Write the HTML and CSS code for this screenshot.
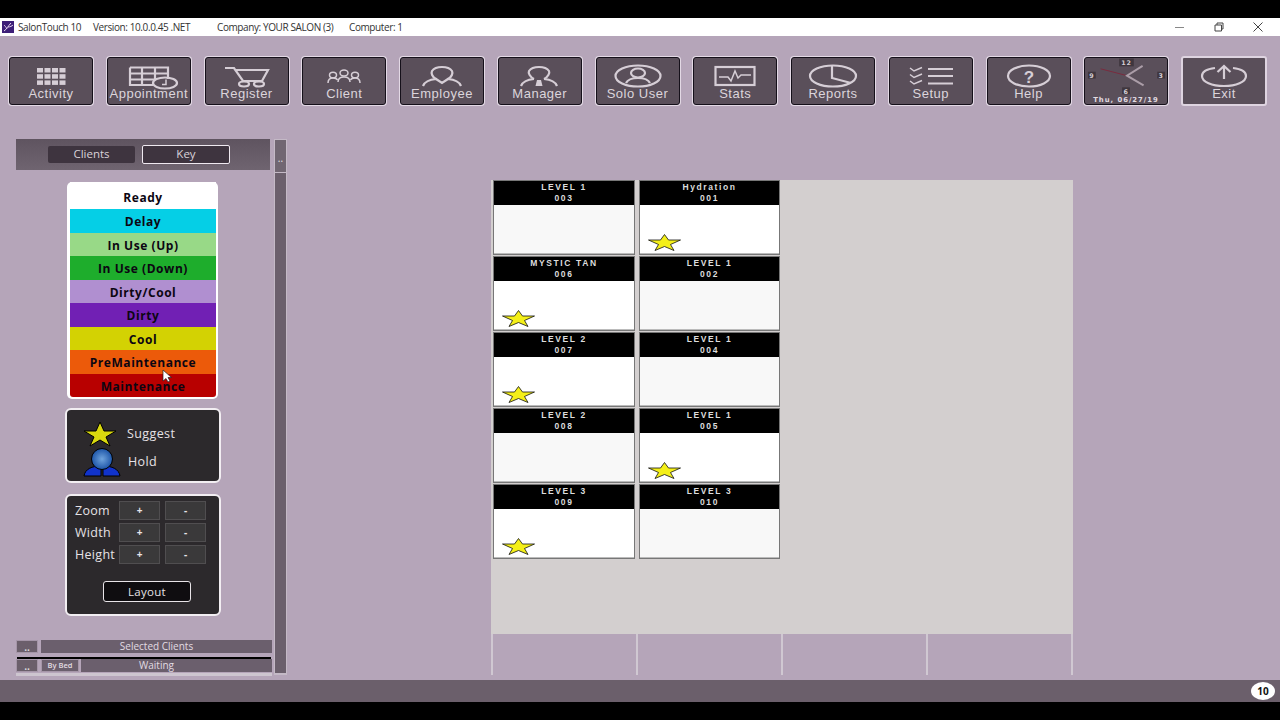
FILE: index.html
```html
<!DOCTYPE html>
<html lang="en">
<head>
<meta charset="utf-8">
<title>SalonTouch 10</title>
<link rel="stylesheet" href="styles.css">
</head>
<body>
<div class="letterbox-top"></div>
<header class="titlebar">
  <svg class="logo" viewBox="0 0 12 12"><rect width="12" height="12" fill="#3d1f78"/><path d="M2 10C5 8 6 5 9 2M6 6C8 6 10 5 11 4M5 8C4 6 3 5 2 4" stroke="#e9d8f0" stroke-width="1" fill="none"/></svg>
  <span class="app">SalonTouch 10</span>
  <span class="version">Version: 10.0.0.45 .NET</span>
  <span class="company">Company: YOUR SALON (3)</span>
  <span class="computer">Computer: 1</span>
  <div class="winctl">
    <svg viewBox="0 0 12 12"><path d="M1 6.500H10" stroke="#888" stroke-width="1"/></svg>
    <svg viewBox="0 0 12 12"><path d="M2 4H8.500V10H2ZM4 4V2H10V8H8.500" stroke="#444" fill="none"/></svg>
    <svg viewBox="0 0 12 12"><path d="M1.500 1.500L10.500 10.500M10.500 1.500L1.500 10.500" stroke="#444" fill="none"/></svg>
  </div>
</header>
<main class="app-body">
  <nav class="toolbar">
    <button class="tool"><svg class="ico" viewBox="0 0 64 30"><g class="fill"><rect x="18" y="8" width="6" height="4.500"/><rect x="25.500" y="8" width="6" height="4.500"/><rect x="33" y="8" width="6" height="4.500"/><rect x="40.500" y="8" width="6" height="4.500"/><rect x="18" y="14.200" width="6" height="4.500"/><rect x="25.500" y="14.200" width="6" height="4.500"/><rect x="33" y="14.200" width="6" height="4.500"/><rect x="40.500" y="14.200" width="6" height="4.500"/><rect x="18" y="20.400" width="6" height="4.500"/><rect x="25.500" y="20.400" width="6" height="4.500"/><rect x="33" y="20.400" width="6" height="4.500"/><rect x="40.500" y="20.400" width="6" height="4.500"/></g></svg><span>Activity</span></button>
    <button class="tool"><svg class="ico" viewBox="0 0 64 30"><path class="line" d="M13 7.500H51V19M13 7.500V25H36M13 13.500H51M13 19.500H37M25 7.500V25M38 7.500V19"/><ellipse class="line" cx="48" cy="23" rx="12" ry="5.500"/><path class="line thin" d="M49 19.500V24.500H45"/></svg><span>Appointment</span></button>
    <button class="tool"><svg class="ico" viewBox="0 0 64 30"><path class="line" d="M10 8H19L28 21H47L53 10H21"/><ellipse class="line" cx="29" cy="24" rx="5" ry="2.500"/><ellipse class="line" cx="44" cy="24" rx="5" ry="2.500"/></svg><span>Register</span></button>
    <button class="tool"><svg class="ico" viewBox="0 0 64 30"><g class="line thin"><ellipse cx="32" cy="13" rx="4" ry="3"/><path d="M26 22C26 18 29 17 32 17C35 17 38 18 38 22"/><ellipse cx="21" cy="15" rx="3.500" ry="2.800"/><path d="M16 23C16 20 18 18 21 18C23 18 25 19 25.500 20"/><ellipse cx="43" cy="15" rx="3.500" ry="2.800"/><path d="M48 23C48 20 46 18 43 18C41 18 39 19 38.500 20"/></g></svg><span>Client</span></button>
    <button class="tool"><svg class="ico" viewBox="0 0 64 30"><path class="line" d="M26 19C22 17 21 13 22 11C24 8 28 7 32 7C36 7 40 8 42 11C43 13 42 17 38 19"/><path class="line" d="M13 26C15 21 20 19.500 26 19L32 23L38 19C44 19.500 49 21 51 26"/></svg><span>Employee</span></button>
    <button class="tool"><svg class="ico" viewBox="0 0 64 30"><path class="line" d="M26 19C22 17 20 13 21 11C23 8 27 7 31 7C35 7 39 8 41 11C42 13 40 17 36 19"/><path class="line" d="M13 26C15 21 20 19.500 26 19M36 19C42 19.500 47 21 49 26"/><path class="fill" d="M29 20H33L34.500 26H27.500Z"/></svg><span>Manager</span></button>
    <button class="tool"><svg class="ico" viewBox="0 0 64 30"><ellipse class="line" cx="32" cy="16" rx="22.500" ry="10.500"/><ellipse class="line" cx="32" cy="13" rx="7" ry="4.500"/><path class="line" d="M20 23C22 19 27 18 32 18C37 18 42 19 44 23"/></svg><span>Solo User</span></button>
    <button class="tool"><svg class="ico" viewBox="0 0 64 30"><rect class="line" x="12.500" y="7" width="39" height="18"/><path class="line thin" d="M16 17H25L28 21L32 11L35 18L38 15H48"/></svg><span>Stats</span></button>
    <button class="tool"><svg class="ico" viewBox="0 0 64 30"><ellipse class="line" cx="32" cy="16" rx="23" ry="10.500"/><path class="line" d="M31 6V18L50 23"/></svg><span>Reports</span></button>
    <button class="tool"><svg class="ico" viewBox="0 0 64 30"><path class="line thin" d="M11 8L15 11L23 7.500M11 14.500L15 17.500L23 14M11 21L15 24L23 20.500"/><path class="line" d="M29 9H54M29 16H54M29 23.500H54"/></svg><span>Setup</span></button>
    <button class="tool"><svg class="ico" viewBox="0 0 64 30"><ellipse class="line" cx="32" cy="16" rx="21" ry="10.500"/><text class="qmark" x="32" y="22.500">?</text></svg><span>Help</span></button>
    <div class="tool clock"><svg viewBox="0 0 84 47"><rect class="num-bg" x="35" y="0.500" width="15" height="8"/><rect class="num-bg" x="3" y="14" width="8" height="7"/><rect class="num-bg" x="74" y="14" width="8" height="7"/><rect class="num-bg" x="38" y="30" width="8" height="7"/><text class="cnum" x="42.500" y="7">12</text><text class="cnum" x="7" y="20.500">9</text><text class="cnum" x="78" y="20.500">3</text><text class="cnum" x="42" y="36.500">6</text><path d="M43 18L16 11" stroke="#7a2a3e" stroke-width="1"/><path d="M59 8L43 18L60 28" stroke="#ab9da8" stroke-width="2" fill="none"/><text class="cdate" x="42" y="45">Thu, 06/27/19</text></svg></div>
    <button class="tool exit"><svg class="ico" viewBox="0 0 64 30"><path class="line" d="M23 8C14 9 10 12 10 16C10 22 20 26 32 26C44 26 54 22 54 16C54 12 50 9 41 8"/><path class="line" d="M32 19V6M25.500 12L32 6L38.500 12"/></svg><span>Exit</span></button>
  </nav>
  <div class="workspace">
    <aside class="sidebar">
      <div class="tabs"><button class="tab">Clients</button><button class="tab active">Key</button></div>
      <ul class="key">
        <li class="k-ready">Ready</li>
        <li class="k-delay">Delay</li>
        <li class="k-up">In Use (Up)</li>
        <li class="k-down">In Use (Down)</li>
        <li class="k-dc">Dirty/Cool</li>
        <li class="k-dirty">Dirty</li>
        <li class="k-cool">Cool</li>
        <li class="k-pre">PreMaintenance</li>
        <li class="k-maint">Maintenance</li>
      </ul>
      <svg class="cursor" viewBox="0 0 10 14"><path d="M1 1V12L4 9.500L6 13L8 12L6 8.500H9.500Z" fill="#fff" stroke="#222" stroke-width=".7"/></svg>
      <div class="card legend">
        <div class="legend-row"><svg class="lg-star" viewBox="0 0 34 26"><path d="M17 1L21 10L33 10L23 16L27 25L17 19L7 25L11 16L1 10L13 10Z" fill="#d9d80e" stroke="#000" stroke-width="1"/></svg><span>Suggest</span></div>
        <div class="legend-row hold"><svg class="lg-person" viewBox="0 0 38 30"><defs><radialGradient id="b"><stop offset="0" stop-color="#6fa3dc"/><stop offset="1" stop-color="#1d55a8"/></radialGradient></defs><path d="M1 29C2 22 9 19 18 19V29ZM37 29C36 22 29 19 20 19V29Z" fill="#1133cc" stroke="#000"/><circle cx="19" cy="12" r="10.500" fill="url(#b)" stroke="#000"/></svg><span>Hold</span></div>
      </div>
      <div class="card sizer">
        <div class="size-row"><label>Zoom</label><button class="step">+</button><button class="step">-</button></div>
        <div class="size-row"><label>Width</label><button class="step">+</button><button class="step">-</button></div>
        <div class="size-row"><label>Height</label><button class="step">+</button><button class="step">-</button></div>
        <button class="layout-btn">Layout</button>
      </div>
      <div class="strip first"><button class="dots">..</button><div class="strip-title">Selected Clients</div></div>
      <div class="strip second"><button class="dots">..</button><button class="bybed">By Bed</button><div class="strip-title waiting">Waiting</div></div>
      <div class="strip-foot"></div>
    </aside>
    <div class="scroll"><div class="thumb">..</div></div>
    <section class="floor-wrap">
      <div class="floor">
        <article class="room"><h3>LEVEL 1<br>003</h3><div class="room-body dim"></div></article>
        <article class="room"><h3>Hydration<br>001</h3><div class="room-body"><svg class="star" viewBox="0 0 33 17"><path d="M16.500 .5L20.500 6H32.500L22.500 10.500L26 16.500L16.500 12.500L7 16.500L10.500 10.500L.5 6H12.500Z"/></svg></div></article>
        <article class="room"><h3>MYSTIC TAN<br>006</h3><div class="room-body"><svg class="star" viewBox="0 0 33 17"><path d="M16.500 .5L20.500 6H32.500L22.500 10.500L26 16.500L16.500 12.500L7 16.500L10.500 10.500L.5 6H12.500Z"/></svg></div></article>
        <article class="room"><h3>LEVEL 1<br>002</h3><div class="room-body dim"></div></article>
        <article class="room"><h3>LEVEL 2<br>007</h3><div class="room-body"><svg class="star" viewBox="0 0 33 17"><path d="M16.500 .5L20.500 6H32.500L22.500 10.500L26 16.500L16.500 12.500L7 16.500L10.500 10.500L.5 6H12.500Z"/></svg></div></article>
        <article class="room"><h3>LEVEL 1<br>004</h3><div class="room-body dim"></div></article>
        <article class="room"><h3>LEVEL 2<br>008</h3><div class="room-body dim"></div></article>
        <article class="room"><h3>LEVEL 1<br>005</h3><div class="room-body"><svg class="star" viewBox="0 0 33 17"><path d="M16.500 .5L20.500 6H32.500L22.500 10.500L26 16.500L16.500 12.500L7 16.500L10.500 10.500L.5 6H12.500Z"/></svg></div></article>
        <article class="room"><h3>LEVEL 3<br>009</h3><div class="room-body"><svg class="star" viewBox="0 0 33 17"><path d="M16.500 .5L20.500 6H32.500L22.500 10.500L26 16.500L16.500 12.500L7 16.500L10.500 10.500L.5 6H12.500Z"/></svg></div></article>
        <article class="room"><h3>LEVEL 3<br>010</h3><div class="room-body dim"></div></article>
      </div>
      <div class="floor-cols"><div></div><div></div><div></div><div></div></div>
    </section>
  </div>
</main>
<footer class="status"><span class="badge">10</span></footer>
<div class="letterbox-bottom"></div>
</body>
</html>
```
FILE: styles.css
```css
* { box-sizing: border-box; }
html, body { margin: 0; padding: 0; }
body { width: 1280px; height: 720px; overflow: hidden; background: #000; font-family: "Open Sans", "Noto Sans", sans-serif; display: flex; flex-direction: column; }
button { font-family: inherit; padding: 0; margin: 0; }
.letterbox-top { height: 18px; background: #000; flex: none; }
.letterbox-bottom { height: 18px; background: #000; flex: none; }

.titlebar { height: 18px; flex: none; background: #fff; display: flex; align-items: center; font-size: 10px; letter-spacing: -.4px; color: #333; padding-left: 2px; }
.logo { width: 12px; height: 12px; flex: none; }
.app { margin-left: 4px; width: 75px; flex: none; }
.version { width: 124px; flex: none; }
.company { width: 132px; flex: none; }
.computer { flex: none; }
.winctl { margin-left: auto; display: flex; gap: 27px; padding-right: 16px; }
.winctl svg { width: 12px; height: 12px; display: block; }

.app-body { flex: 1; background: #b5a5b9; display: flex; flex-direction: column; min-height: 0; }
.toolbar { display: flex; gap: 13.750px; padding: 21px 0 0 9px; height: 69px; flex: none; }
.tool { width: 84px; height: 48px; flex: none; background: #5a4f5a; border: 1px solid #15101a; border-radius: 3px; box-shadow: 0 0 0 1px #e3d9e5; color: #dcd5dc; display: flex; flex-direction: column; align-items: center; font-family: "Liberation Sans", Arial, sans-serif; font-size: 13px; line-height: 14px; padding: 2px 0 0; }
.tool span { margin-top: -3px; letter-spacing: .5px; white-space: nowrap; }
.ico { width: 64px; height: 30px; display: block; flex: none; }
.line { fill: none; stroke: #d6ced6; stroke-width: 2.200; }
.thin { stroke-width: 1.500; }
.fill { fill: #d6ced6; }
.qmark { fill: #d6ced6; font: bold 17px "Liberation Sans", sans-serif; text-anchor: middle; }
.clock { padding: 0; background: #5a4f5a; }
.clock svg { width: 82px; height: 46px; display: block; }
.num-bg { fill: #3f363e; }
.cnum { fill: #d4cdd4; font: bold 6.500px "DejaVu Sans", sans-serif; text-anchor: middle; letter-spacing: .8px; }
.cdate { fill: #e2dce2; font: bold 7px "DejaVu Sans", sans-serif; text-anchor: middle; letter-spacing: 1px; }
.exit { width: 86px; height: 50px; margin: -1px; border: 2px solid #ded4e0; box-shadow: none; padding-top: 2px; }

.workspace { flex: 1; margin-top: 34px; display: flex; min-height: 0; position: relative; }
.sidebar { width: 256px; margin-left: 16px; flex: none; display: flex; flex-direction: column; position: relative; }
.tabs { height: 31px; width: 254px; flex: none; background: linear-gradient(#5f5460, #6f6470); display: flex; align-items: center; gap: 7px; padding-left: 32px; }
.tab { width: 87px; height: 17px; border: 0; border-radius: 2px; background: #3e343f; color: #d9d2d9; font-size: 11.500px; line-height: 15px; padding-bottom: 2px; }
.tab.active { width: 88px; height: 19px; border: 1.500px solid #efe9f0; line-height: 13px; }

.key { list-style: none; margin: 12px 0 0 51px; padding: 0 2px 2px 3px; width: 151px; height: 217px; flex: none; background: #fff; border-radius: 5px; display: flex; flex-direction: column; }
.key li { flex: 1; display: flex; align-items: center; justify-content: center; font-size: 12px; font-weight: 700; color: #0c0612; letter-spacing: .55px; padding-top: 2px; }
.key .k-ready { flex: 0 0 27px; background: #fff; padding-top: 3px; }
.k-delay { background: #05cfe6; }
.k-up { background: #98d987; }
.k-down { background: #1ead2c; }
.k-dc { background: #b08fd0; }
.k-dirty { background: #7120b4; }
.k-cool { background: #d3d203; }
.k-pre { background: #ec5a0a; }
.key .k-maint { background: #b80000; border-radius: 0 0 3px 3px; }
.cursor { position: absolute; left: 146px; top: 230px; width: 10px; height: 14px; }

.card { background: #2c292c; border: 2px solid #f2eef2; border-radius: 6px; color: #e6e2e6; margin-left: 49px; width: 156px; flex: none; }
.legend { height: 75px; margin-top: 9px; padding: 10px 0 0 16px; font-size: 12.500px; font-weight: 500; letter-spacing: .4px; }
.legend-row { display: flex; align-items: center; gap: 10px; height: 27px; }
.lg-star { width: 34px; height: 26px; flex: none; }
.lg-person { width: 38px; height: 30px; flex: none; }
.legend-row.hold { gap: 7px; margin-top: 1px; }
.sizer { height: 122px; margin-top: 11px; padding: 5px 12px 0 8px; font-size: 12.500px; }
.size-row { display: flex; align-items: center; height: 19px; margin-bottom: 3px; }
.size-row label { width: 44px; flex: none; font-weight: 500; letter-spacing: .3px; white-space: nowrap; }
.step { width: 41px; height: 19px; background: #3a393a; border: 1px solid #504e50; color: #e8e5e8; font-size: 10px; font-weight: 700; line-height: 15px; margin-right: 5px; flex: none; }
.layout-btn { display: block; margin: 17px 0 0 28px; width: 88px; height: 21px; background: #0f0d10; border: 1.500px solid #e8e4e8; border-radius: 3px; color: #e5e1e5; font-size: 11.500px; line-height: 17px; letter-spacing: .3px; }

.strip { display: flex; gap: 3px; width: 256px; flex: none; color: #e2dce2; font-size: 10px; }
.strip.first { margin-top: 24px; height: 13px; }
.strip.second { margin-top: 6px; height: 13px; box-shadow: 0 -3px 0 -1px #000; }
.dots { width: 22px; height: 13px; background: #6b5f6b; border: 1px solid #a596a8; color: #ddd; font-size: 10px; font-weight: 700; line-height: 13px; }
.strip-title { flex: 1; background: #6b5f6d; text-align: center; line-height: 13px; }
.strip-title.waiting { padding-right: 40px; }
.bybed { width: 38px; height: 13px; background: #6b5f6d; border: 1px solid #a596a8; color: #e2dce2; font-size: 7.500px; font-weight: 600; line-height: 11px; margin-right: -1px; }
.strip-foot { width: 256px; height: 3px; margin-top: 1px; background: #cdc5cf; flex: none; }

.scroll { width: 13px; height: 536px; margin-left: 2px; flex: none; background: #6b5f6c; border: 1px solid #c4b9c6; border-bottom-width: 2px; }
.thumb { height: 33px; border-bottom: 1px solid #c4b9c6; background: #716672; color: #e5e0e5; font-size: 10px; line-height: 36px; text-align: center; }

.floor-wrap { width: 582px; margin: 41px 0 0 204px; flex: none; display: flex; flex-direction: column; }
.floor { height: 454px; flex: none; background: #d3cfcf; padding: 0 0 0 2px; display: grid; grid-template-columns: 142px 141px; grid-auto-rows: 75px; column-gap: 4px; row-gap: 1px; align-content: start; }
.room { border: 1px solid #777; display: flex; flex-direction: column; margin: 0; background: #fff; }
.room h3 { margin: 0; height: 24px; flex: none; background: #000; color: #ddd; font: 700 8.500px/11px "Liberation Sans", sans-serif; letter-spacing: 1.600px; text-align: center; padding-top: 1px; }
.room-body { flex: 1; background: #fff; position: relative; border-bottom: 1px solid #bbb; }
.room-body.dim { background: #f8f8f8; }
.star { position: absolute; left: 8px; bottom: 2px; width: 33px; height: 17px; fill: #f4ef18; stroke: #111; stroke-width: .8; }
.floor-cols { flex: none; display: grid; grid-template-columns: repeat(4, 1fr); height: 41px; border-left: 2px solid #d0c8d2; }
.floor-cols div { border-right: 2px solid #d0c8d2; }

.status { height: 22px; flex: none; background: #6b5f6b; position: relative; display: flex; justify-content: flex-end; align-items: center; padding-right: 5px; }
.badge { width: 24px; height: 18px; background: #fff; border-radius: 50%; color: #111; font-size: 10px; font-weight: 700; line-height: 18px; text-align: center; }
```
